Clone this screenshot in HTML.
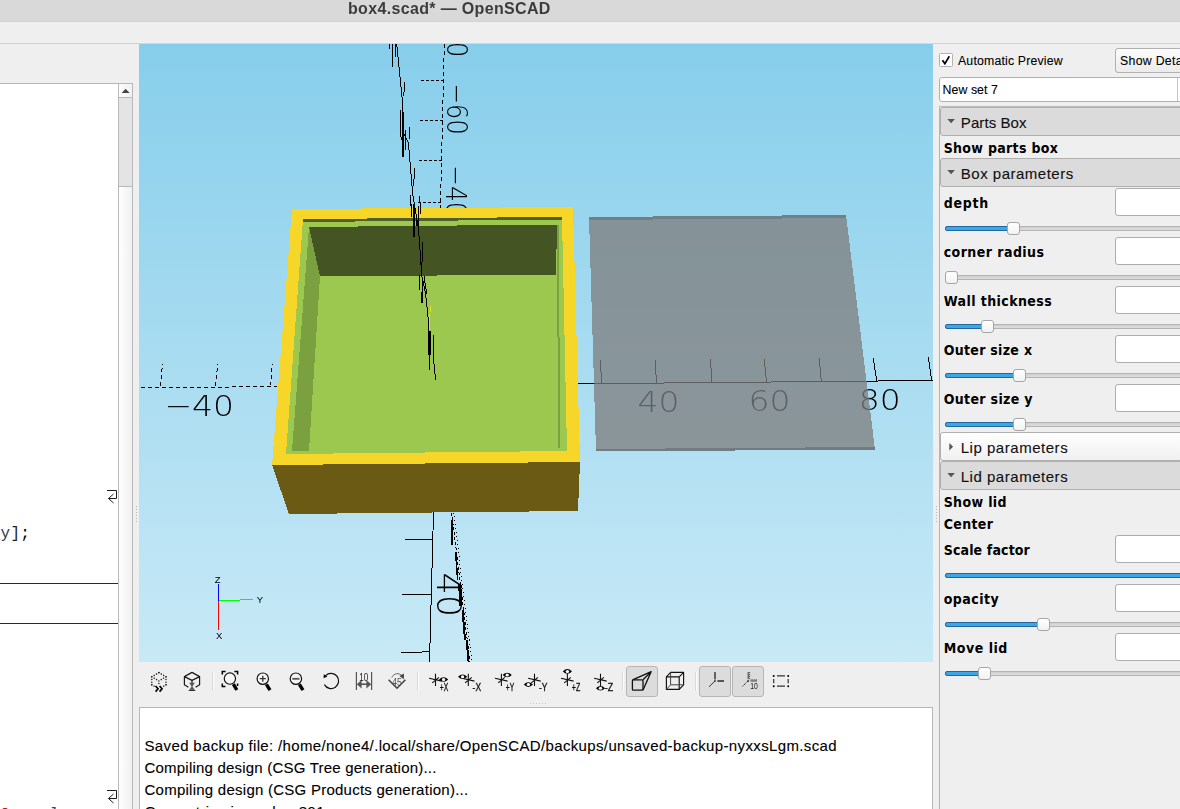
<!DOCTYPE html>
<html lang="en">
<head>
<meta charset="utf-8">
<title>box4.scad* — OpenSCAD</title>
<style>
*{box-sizing:border-box;margin:0;padding:0}
html,body{width:1180px;height:809px;overflow:hidden;background:#efefef}
body{position:relative;font-family:"Liberation Sans","DejaVu Sans",sans-serif;color:#000;font-size:12px}
.abs{position:absolute}
#titlebar{left:0;top:0;width:1180px;height:22px;background:linear-gradient(#d9d9d9 0,#d9d9d9 21px,#d3d3d3 21px,#d3d3d3 22px)}
#title{left:348px;top:-1px;height:20px;line-height:20px;font-weight:bold;font-size:16px;letter-spacing:0.34px;color:#3c3c3c;white-space:nowrap;transform:translateY(-0.3px);will-change:transform}
#topline{left:0;top:43px;width:139px;height:1px;background:#d1d1d1}
#topline2{left:139px;top:43px;width:794px;height:1px;background:#d9d5d2}
#topline3{left:933px;top:43px;width:247px;height:1px;background:#d2d2d2}
#topline0{left:0;top:42px;width:1180px;height:1px;background:#f1f1f1}
/* editor */
#editor{left:0;top:83px;width:119px;height:726px;background:#fff;border-top:1px solid #b6b6b6}
#vscroll{left:118px;top:83px;width:15px;height:726px;border:1px solid #b8b8b8;border-bottom:0;background:linear-gradient(90deg,#fff,#f0f0f0)}
#vs-up{left:0;top:0;width:13px;height:13px;background:linear-gradient(90deg,#fdfdfd,#f1f1f1);border-bottom:1px solid #b8b8b8;height:14px}
#vs-thumb{left:0;top:14px;width:13px;height:89px;background:#e4e4e4;border-bottom:1px solid #b8b8b8}
.code{font-family:"Liberation Mono","DejaVu Sans Mono",monospace;color:#333;white-space:pre}
.hr{left:0;width:118px;height:1px;background:#2a2a2a}
/* viewport */
#view{left:139px;top:44px;width:794px;height:618px;display:block}
/* console */
#console{left:139px;top:707px;width:794px;height:110px;background:#fff;border:1px solid #b6b6b6}
.cl{white-space:nowrap;font-size:15px;line-height:20px;height:20px;color:#000;-webkit-text-stroke:0.12px #000}
/* right panel */
#pline{left:939px;top:106px;width:1px;height:703px;background:#b4b4b4}
/*PANELCSS-START*/
.tx{white-space:nowrap;height:20px}
.rg{-webkit-text-stroke:0.1px #000}
.cb{left:939px;top:53px;width:14px;height:14px;background:#fff;border:1px solid #b2b2b2;border-radius:1.5px}
.btn{left:1115px;top:48px;width:80px;height:25px;border:1px solid #b0b0b0;border-radius:3px;background:linear-gradient(#fcfcfc,#ebebeb)}
.combo{left:939px;top:77px;width:260px;height:25px;border:1px solid #b0b0b0;border-radius:3px;background:#fff}
.gh{left:940px;width:250px;height:29px;border:1px solid #b0b0b0;border-radius:3px;background:#dbdbdb}
.gh.col{background:linear-gradient(#ffffff,#f0f0f0)}
.in{left:1115px;width:80px;height:28px;background:#fff;border:1px solid #adadad;border-radius:3px}
.sg{left:945px;width:240px;height:5px;border:1px solid #b4b4b4;border-radius:2px;background:linear-gradient(#cfcfcf,#dedede)}
.sf{left:945px;height:5px;border:1px solid #22689e;border-radius:2px;background:#3da6e6}
.sh{width:13px;height:13px;border:1px solid #a6a6a6;border-radius:3px;background:linear-gradient(#ffffff,#f2f2f2)}
/*PANELCSS-END*/
</style>
</head>
<body>
<div id="titlebar" class="abs"></div>
<div id="title" class="abs">box4.scad* — OpenSCAD</div>
<div id="topline" class="abs"></div>
<div id="topline0" class="abs"></div>
<div id="topline2" class="abs"></div>
<div id="topline3" class="abs"></div>

<!-- EDITOR -->
<div id="editor" class="abs"></div>
<div id="vscroll" class="abs"><div id="vs-up" class="abs"><svg class="abs" style="left:1px;top:3px" width="11" height="8" viewBox="0 0 11 8"><path d="M1.6 6.1L5.6 1.7L9.6 6.1Z" fill="#444"/></svg></div><div id="vs-thumb" class="abs"></div></div>
<!--EDITOR-CONTENT-START-->
<div class="abs code" style="left:-9.4px;top:521px;font-size:16px;letter-spacing:0.3px;line-height:26px;height:26px;color:#3a3a48"><span style="color:#39f">_</span>y<span style="color:#1c1c3c">]</span><span style="color:#000">;</span></div>
<div class="abs hr" style="top:583px"></div>
<div class="abs hr" style="top:623px"></div>
<svg class="abs" style="left:105px;top:488px" width="14" height="17" viewBox="105 488 14 17" fill="none" stroke="#1c1c1c" stroke-width="1"><path d="M107 490.5H116.5V498.5H108.5M113.5 494L108.5 498.5L113.5 503" /></svg>
<svg class="abs" style="left:105px;top:788px" width="14" height="17" viewBox="105 788 14 17" fill="none" stroke="#1c1c1c" stroke-width="1"><path d="M107 790.5H116.5V798.5H108.5M113.5 794L108.5 798.5L113.5 803" /></svg>
<div class="abs code" style="left:0.3px;top:802px;font-size:16px;letter-spacing:0.3px;line-height:26px;height:26px;color:#b01020">0<span style="color:#204a87">    l</span></div>
<svg class="abs" style="left:134px;top:500px" width="5" height="30" viewBox="134 500 5 30"><g fill="#b4b4b4"><rect x="136" y="506" width="1" height="1"/><rect x="136" y="509" width="1" height="1"/><rect x="136" y="512" width="1" height="1"/><rect x="136" y="515" width="1" height="1"/><rect x="136" y="518" width="1" height="1"/><rect x="136" y="521" width="1" height="1"/></g></svg>
<svg class="abs" style="left:934px;top:500px" width="5" height="30" viewBox="934 500 5 30"><g fill="#b4b4b4"><rect x="936" y="506" width="1" height="1"/><rect x="936" y="509" width="1" height="1"/><rect x="936" y="512" width="1" height="1"/><rect x="936" y="515" width="1" height="1"/><rect x="936" y="518" width="1" height="1"/><rect x="936" y="521" width="1" height="1"/></g></svg>
<!--EDITOR-CONTENT-END-->

<!-- VIEWPORT -->
<!--VIEWPORT-START-->
<svg id="view" class="abs" viewBox="139 44 794 618" width="794" height="618" shape-rendering="crispEdges" style="will-change:transform">
<defs>
<linearGradient id="sky" x1="0" y1="0" x2="0" y2="1"><stop offset="0" stop-color="#87ceeb"/><stop offset="1" stop-color="#c8e9f6"/></linearGradient>
</defs>
<rect x="139" y="44" width="794" height="618" fill="url(#sky)"/>
<g id="axes-back" stroke="#000" stroke-width="1" fill="none">
<!-- negative Y axis (dashed) -->
<path d="M141.5 387.8L277.5 386.6" stroke-dasharray="4 3"/>
<path d="M160.6 386L162.4 364M215.6 386L217.7 364M270.8 385.5L272.2 364" stroke-dasharray="4 3"/>
<!-- upper dashed scale -->
<path d="M444.3 44L440.4 208" stroke-dasharray="4 3"/>
<path d="M443.5 80.5H420M442.5 120.5H419M441.5 160.5H418M440.5 202.5H417" stroke-dasharray="3 2"/>
<!-- lower scale -->
<path d="M433.5 512L429.5 662"/>
<path d="M432.5 539.5H405M431.3 594.5H402M429.6 651.8L401 652.6"/>
<!-- Y axis positive -->
<path d="M578 383.8L933 380.5"/>
<path d="M601.7 383.5L600.3 360M656.5 383L655.1 360M711.9 382.5L710.5 359M766.5 382L764.2 359M821.3 381.5L819.2 358M876.7 381L873.2 357.7M931.7 380.5L928.2 356.8"/>
</g>
<g id="axis-labels" font-family="'DejaVu Sans','Liberation Sans',sans-serif" font-weight="200" font-size="29.2" fill="#000" shape-rendering="auto">
<text transform="translate(164.4 416.1) scale(1.13 1)">−40</text>
<text transform="translate(637.4 411.8) scale(1.13 1)">40</text>
<text transform="translate(748.6 411) scale(1.13 1)">60</text>
<text transform="translate(858.8 410.1) scale(1.13 1)">80</text>
<text transform="translate(447.3 41.8) rotate(90) scale(0.84 1)">0</text>
<text transform="translate(447.3 83.4) rotate(90) scale(0.84 1)" letter-spacing="-0.1">−60</text>
<text transform="translate(446 165) rotate(90) scale(0.86 1)" letter-spacing="-0.1">−40</text>
<text transform="translate(437 572.4) rotate(90) scale(1.2 1.14)" letter-spacing="0">40</text>
</g>
<!-- box -->
<polygon points="292,209 573,207 580,462 272,465" fill="#f6d628"/>
<polygon points="272,465 580,462 578,511 289,514" fill="#6b5a13"/>
<polygon points="303,219 562,217 567,451 286,454" fill="#9cc850"/>
<polygon points="303,219 562,217 562,219.5 303,222" fill="#4f6128"/>
<polygon points="309,227 557,224.5 556,274.5 320,276.5" fill="#445523"/>
<polygon points="309,227 320,276.5 309,451 292,451" fill="#7ba040"/>
<polygon points="556.5,224.5 558.5,224.5 560.5,448 558.5,448" fill="#7ba040"/>
<!-- X axis squiggle -->
<g id="squig" stroke="#000" stroke-width="1" fill="none">
<path d="M396.7 44L402.3 99.6L404 134L408.4 143L412.8 195L418.4 228L419.5 242.4L421.7 275.2L425.6 294L428.9 325L429.5 356L429.5 369.6"/>
<path d="M392.6 44V66.8M389.5 44V49M395.5 44V57" />
<path d="M404.5 81.8V89.6L403 96M400.6 109.6V134L401.5 140M409.5 126.9V139M405.5 130V150"/><path d="M403 112V157" stroke-width="2"/>
<path d="M414.5 168V175.2L413 186M410.6 195V206M411 204V217M416.5 217V226M418.4 206V228M419.5 196L421 214"/>
<path d="M413.5 204V237" stroke-width="2"/>
<path d="M422.3 242.4V259.6L421.5 266M419.5 275V290M424 276L426.7 294M422 280V302.7" />
<path d="M422 292V302.7" stroke-width="2"/>
<path d="M429.3 331L429.3 355" stroke-width="3"/>
<path d="M433.4 335V357.4L435.6 379.6"/>
<path d="M430.6 306V311.8M429.5 313.5V330" stroke="#f6d628"/>
<path d="M451.6 512.5L470 662" stroke-dasharray="3 2"/>
<path d="M453.6 512.5L472 662" stroke-dasharray="1 3"/>
<path d="M451.8 520V544.6M462.5 610L465 640M466.6 640L468.6 662" stroke-width="2"/><path d="M459.6 584L461 606" stroke-width="3"/>
<path d="M455.6 552L457.6 580" stroke-width="1.5"/>
</g>
<!-- lid -->
<polygon points="589,217 846,215 875,449.5 596,451.5" fill="#7d7d7d" fill-opacity="0.755"/>
<polygon points="589,217 846,215 846.4,218 589,220" fill="#000" fill-opacity="0.13"/>
<polygon points="596,449 875,447 875,449.5 596,451.5" fill="#000" fill-opacity="0.16"/>
<!-- small axes indicator -->
<g stroke-width="1" fill="none">
<path d="M218.5 584V601" stroke="#0000ff"/>
<path d="M218.5 600.5H240M240 599.5H253" stroke="#00ff00"/>
<path d="M218.5 601V630" stroke="#ff0000"/>
</g>
<g font-family="'Liberation Sans',sans-serif" fill="#000" font-size="9.5" shape-rendering="auto">
<text x="214.7" y="583">Z</text>
<text x="256.7" y="603">Y</text>
<text x="216" y="639.3">X</text>
</g>
</svg>
<!--VIEWPORT-END-->

<!-- TOOLBAR -->
<!--TOOLBAR-START-->
<svg id="tb" class="abs" viewBox="139 662 794 45" width="794" height="45" style="left:139px;top:662px;will-change:transform" fill="none" stroke-linecap="butt">
<path d="M212.5 672V691" stroke="#d9d9d9"/><path d="M213.5 672V691" stroke="#fbfbfb"/>
<path d="M417.5 672V691" stroke="#d9d9d9"/><path d="M418.5 672V691" stroke="#fbfbfb"/>
<path d="M622.5 672V691" stroke="#d9d9d9"/><path d="M623.5 672V691" stroke="#fbfbfb"/>
<path d="M695.5 672V691" stroke="#d9d9d9"/><path d="M696.5 672V691" stroke="#fbfbfb"/>
<rect x="626.5" y="666.5" width="31" height="30" rx="2.5" fill="#dcdcdc" stroke="#b6b6b6"/>
<rect x="699.5" y="666.5" width="31" height="30" rx="2.5" fill="#dcdcdc" stroke="#b6b6b6"/>
<rect x="732.5" y="666.5" width="31" height="30" rx="2.5" fill="#dcdcdc" stroke="#b6b6b6"/>
<g stroke="#1a1a1a" stroke-width="1.5" stroke-linecap="round" stroke-dasharray="0.01 2.74"><path d="M158.9 672.6L166 676.8"/><path d="M158.9 672.6L151.8 676.8"/><path d="M151.8 676.8L158.9 680.9"/><path d="M166 676.8L158.9 680.9"/></g><g stroke="#1a1a1a" stroke-width="1.5" stroke-linecap="round" stroke-dasharray="0.01 2.66"><path d="M166 676.8V684.9"/><path d="M151.8 676.8V684.9"/><path d="M158.9 680.9V686"/><path d="M166 684.8L162.4 687"/><path d="M151.8 684.8L155.4 687"/></g>
<path d="M155.6 686L158 688.8L155.6 691.6M159.6 686L162 688.8L159.6 691.6" stroke="#000" stroke-width="1.7"/>
<g stroke="#1a1a1a" stroke-width="1.2" stroke-linejoin="round"><path d="M192 672.4L199.6 676.6V684.8L195.6 687.2M192 672.4L184.4 676.6V684.8L188.4 687.2M184.4 676.6L192 680.4L199.6 676.6M192 680.4V683"/></g>
<path d="M189.2 682.8H194.8L192.4 686.6L194.6 689.8H189.4L191.6 686.6Z" fill="#555"/><path d="M188.8 690.4H195.2" stroke="#222" stroke-width="1.1"/>
<g stroke="#000" stroke-width="1.5"><path d="M222.3 674.6V671.6H225.6M234.4 671.6H237.6V674.6M222.3 683.4V686.4H225.4M237.6 683.4V686"/></g>
<circle cx="229.9" cy="678.6" r="5.65" stroke="#111" stroke-width="1.2" fill="#f6f6f6"/><path d="M233.4 684.2L236.8 690" stroke="#000" stroke-width="3.4"/>
<circle cx="262.8" cy="678.7" r="5.7" stroke="#111" stroke-width="1.2" fill="#f6f6f6"/><path d="M259.8 678.7H265.8M262.8 675.7V681.7" stroke="#333" stroke-width="1.3"/><path d="M266.4 684.4L270 690.2" stroke="#000" stroke-width="3.4"/>
<circle cx="295.9" cy="678.7" r="5.7" stroke="#111" stroke-width="1.2" fill="#f6f6f6"/><path d="M292.3 678.8H299.5" stroke="#555" stroke-width="1.8"/><path d="M299.4 684.4L303 690.2" stroke="#000" stroke-width="3.4"/>
<path d="M325.6 675.6A7.6 7.6 0 1 1 324.4 684.6" stroke="#111" stroke-width="1.2"/><path d="M323.8 674.2L327.4 676.4L323.6 678.2Z" fill="#000"/>
<path d="M356.4 672V690M371.6 672V690" stroke="#555" stroke-width="1.2"/><path d="M360 684.2H368" stroke="#555" stroke-width="1.6"/><path d="M356.8 684.2L361.6 680V688.6Z M371.2 684.2L366.4 680V688.6Z" fill="#555"/>
<text x="359.2" y="680.6" font-family="'Liberation Sans',sans-serif" font-size="10.5" textLength="9" lengthAdjust="spacingAndGlyphs" fill="#222">10</text>
<path d="M388.6 679.8L397 688.2L405.4 679.8" stroke="#444" stroke-width="1.6"/><path d="M391.8 677.6A6 6 0 0 1 402 675.8" stroke="#666" stroke-width="1"/><path d="M399.4 676L404 673.4L403.8 679.2Z" fill="#444"/>
<text x="392.2" y="685.6" font-family="'Liberation Sans',sans-serif" font-size="10" textLength="9.6" lengthAdjust="spacingAndGlyphs" fill="#555">45</text>
<path d="M435.5 673.6999999999999V686.1M429.1 678.3L441.7 681.1M432.3 682.9L438.9 677.3" stroke="#111" stroke-width="1.1"/>
<path d="M439.0 679.5Q443.6 674.9 448.20000000000005 679.5Q443.6 684.1 439.0 679.5Z" fill="#000"/><ellipse cx="443.6" cy="679.5" rx="1.7" ry="1.5" fill="#fff"/>
<text x="439.8" y="691.4" font-family="'Liberation Sans',sans-serif" font-size="10.5" textLength="8.4" lengthAdjust="spacingAndGlyphs" fill="#111" stroke="#111" stroke-width="0.35">+X</text>
<path d="M468.3 673.6999999999999V686.1M461.90000000000003 678.3L474.5 681.1M465.1 682.9L471.7 677.3" stroke="#111" stroke-width="1.1"/>
<path d="M458.0 676.8Q462.6 672.1999999999999 467.20000000000005 676.8Q462.6 681.4 458.0 676.8Z" fill="#000"/><ellipse cx="462.6" cy="676.8" rx="1.7" ry="1.5" fill="#fff"/>
<text x="472.6" y="691.4" font-family="'Liberation Sans',sans-serif" font-size="10.5" textLength="8.4" lengthAdjust="spacingAndGlyphs" fill="#111" stroke="#111" stroke-width="0.35">-X</text>
<path d="M501.4 673.6999999999999V686.1M495.0 678.3L507.59999999999997 681.1M498.2 682.9L504.79999999999995 677.3" stroke="#111" stroke-width="1.1"/>
<path d="M502.59999999999997 675Q507.2 670.4 511.8 675Q507.2 679.6 502.59999999999997 675Z" fill="#000"/><ellipse cx="507.2" cy="675" rx="1.7" ry="1.5" fill="#fff"/>
<text x="505.8" y="691.4" font-family="'Liberation Sans',sans-serif" font-size="10.5" textLength="8.4" lengthAdjust="spacingAndGlyphs" fill="#111" stroke="#111" stroke-width="0.35">+Y</text>
<path d="M534.5 673.6999999999999V686.1M528.1 678.3L540.7 681.1M531.3 682.9L537.9 677.3" stroke="#111" stroke-width="1.1"/>
<path d="M523.8 684.6Q528.4 680.0 533.0 684.6Q528.4 689.2 523.8 684.6Z" fill="#000"/><ellipse cx="528.4" cy="684.6" rx="1.7" ry="1.5" fill="#fff"/>
<text x="539" y="691.4" font-family="'Liberation Sans',sans-serif" font-size="10.5" textLength="8.4" lengthAdjust="spacingAndGlyphs" fill="#111" stroke="#111" stroke-width="0.35">-Y</text>
<path d="M567.4 673.6999999999999V686.1M561.0 678.3L573.6 681.1M564.1999999999999 682.9L570.8 677.3" stroke="#111" stroke-width="1.1"/>
<path d="M562.8 671.4Q567.4 666.8 572.0 671.4Q567.4 676.0 562.8 671.4Z" fill="#000"/><ellipse cx="567.4" cy="671.4" rx="1.7" ry="1.5" fill="#fff"/>
<text x="571.8" y="691.4" font-family="'Liberation Sans',sans-serif" font-size="10.5" textLength="8.4" lengthAdjust="spacingAndGlyphs" fill="#111" stroke="#111" stroke-width="0.35">+Z</text>
<path d="M600.5 673.6999999999999V686.1M594.1 678.3L606.7 681.1M597.3 682.9L603.9 677.3" stroke="#111" stroke-width="1.1"/>
<path d="M595.9 688.3Q600.5 683.6999999999999 605.1 688.3Q600.5 692.9 595.9 688.3Z" fill="#000"/><ellipse cx="600.5" cy="688.3" rx="1.7" ry="1.5" fill="#fff"/>
<text x="604.8" y="691.4" font-family="'Liberation Sans',sans-serif" font-size="10.5" textLength="8.4" lengthAdjust="spacingAndGlyphs" fill="#111" stroke="#111" stroke-width="0.35">-Z</text>
<g stroke="#111" stroke-width="1.3" stroke-linejoin="round"><rect x="632.4" y="679.8" width="10.6" height="10.4" rx="1"/><path d="M632.6 679.8L651.2 671.6L643 679.8M651.2 671.6L643 690"/></g>
<g stroke="#111" stroke-width="1.15" stroke-linejoin="round"><path d="M666.4 676.8L670.6 672.4H683.6V684.8L679.2 689.4H666.4Z"/><path d="M666.4 676.8H679.2V689.4M679.2 676.8L683.6 672.4" /><path d="M670.6 672.4V684.8H683.6M670.6 684.8L666.4 689.4" stroke="#444" stroke-width="1"/></g>
<path d="M715 672V679.4M717.4 681H724" stroke="#555" stroke-width="1.8"/><path d="M715 681L709 686.8" stroke="#222" stroke-width="0.9"/><rect x="714.2" y="680.2" width="1.6" height="1.6" fill="#333"/>
<path d="M748.2 672V679.2" stroke="#555" stroke-width="1.2"/><path d="M749.4 672V679.2" stroke="#555" stroke-width="1.4" stroke-dasharray="1.1 0.8"/><path d="M750.4 681H757" stroke="#555" stroke-width="1.1"/><path d="M750.4 679.9H757" stroke="#555" stroke-width="1.2" stroke-dasharray="1.1 0.8"/><path d="M748 681L742 686.8" stroke="#222" stroke-width="1" stroke-dasharray="1.4 0.7"/><rect x="747.4" y="680.2" width="1.6" height="1.6" fill="#333"/>
<text x="750.2" y="689.4" font-family="'Liberation Sans',sans-serif" font-size="8.6" textLength="7.6" lengthAdjust="spacingAndGlyphs" fill="#222">10</text>
<g fill="#000"><circle cx="773.7" cy="675.9" r="1"/><circle cx="788.2" cy="675.9" r="1"/><circle cx="773.7" cy="686.2" r="1"/><circle cx="788.2" cy="686.2" r="1"/></g><path d="M777 675.9H785M777 686.2H785M773.7 679V683.2M788.2 679V683.2" stroke="#333" stroke-width="1.2"/>
<g fill="#c4c4c4"><rect x="530" y="703" width="1" height="1"/><rect x="533" y="703" width="1" height="1"/><rect x="536" y="703" width="1" height="1"/><rect x="539" y="703" width="1" height="1"/><rect x="542" y="703" width="1" height="1"/><rect x="545" y="703" width="1" height="1"/></g>
</svg>
<!--TOOLBAR-END-->

<!-- CONSOLE -->
<div id="console" class="abs"></div>
<div class="abs cl" style="left:144.5px;top:736px;letter-spacing:0.36px">Saved backup file: /home/none4/.local/share/OpenSCAD/backups/unsaved-backup-nyxxsLgm.scad</div>
<div class="abs cl" style="left:144.5px;top:758px;letter-spacing:0.21px">Compiling design (CSG Tree generation)...</div>
<div class="abs cl" style="left:144.5px;top:780px;letter-spacing:0.25px">Compiling design (CSG Products generation)...</div>
<div class="abs cl" style="left:144.5px;top:802px;letter-spacing:0.4px">Geometries in cache: 891</div>

<!-- PANEL -->
<div id="pline" class="abs"></div>
<!--PANEL-START-->
<div class="abs cb"><svg width="12" height="12" viewBox="0 0 12 12" class="abs" style="left:0;top:0"><path d="M2.4 6.2L4.9 9.6L9.3 2.3" fill="none" stroke="#000" stroke-width="1.7"/></svg></div>
<div class="abs tx rg" style="left:958.00px;top:51px;font:12.3px 'Liberation Sans';line-height:20px;letter-spacing:0.17px;color:#000">Automatic Preview</div>
<div class="abs btn"></div><div class="abs tx rg" style="left:1120.00px;top:51px;font:12.3px 'Liberation Sans';line-height:20px;letter-spacing:0.3px;color:#000">Show Details</div>
<div class="abs combo"></div><div class="abs" style="left:1177px;top:78px;width:1px;height:23px;background:#c4c4c4"></div><div class="abs tx rg" style="left:942.60px;top:80px;font:12.3px 'Liberation Sans';line-height:20px;letter-spacing:0.07px;color:#000">New set 7</div>
<div class="abs" style="left:939px;top:106px;width:241px;height:1px;background:#b9b9b9"></div>
<div class="abs gh" style="top:107px"></div><svg class="abs" style="left:946px;top:117px" width="10" height="10" viewBox="0 0 10 10"><path d="M1.3 2H8.9L5.1 6.3Z" fill="#555"/></svg><div class="abs tx rg" style="left:960.80px;top:113px;font:15px 'Liberation Sans';line-height:20px;letter-spacing:0.08px;color:#111">Parts Box</div>
<div class="abs tx" style="left:943.70px;top:138px;font:bold 14px 'DejaVu Sans Condensed';line-height:20px;letter-spacing:0.31px;color:#000">Show parts box</div>
<div class="abs gh" style="top:158px"></div><svg class="abs" style="left:946px;top:168px" width="10" height="10" viewBox="0 0 10 10"><path d="M1.3 2H8.9L5.1 6.3Z" fill="#555"/></svg><div class="abs tx rg" style="left:960.80px;top:164px;font:15px 'Liberation Sans';line-height:20px;letter-spacing:0.5px;color:#111">Box parameters</div>
<div class="abs tx" style="left:943.70px;top:193px;font:bold 14px 'DejaVu Sans Condensed';line-height:20px;letter-spacing:0.75px;color:#000">depth</div>
<div class="abs in" style="top:188px"></div>
<div class="abs sg" style="top:226px"></div><div class="abs sf" style="top:226px;width:66px"></div><div class="abs sh" style="left:1007px;top:222px"></div>
<div class="abs tx" style="left:943.70px;top:242px;font:bold 14px 'DejaVu Sans Condensed';line-height:20px;letter-spacing:0.45px;color:#000">corner radius</div>
<div class="abs in" style="top:237px"></div>
<div class="abs sg" style="top:275px"></div><div class="abs sh" style="left:945px;top:271px"></div>
<div class="abs tx" style="left:943.70px;top:291px;font:bold 14px 'DejaVu Sans Condensed';line-height:20px;letter-spacing:0.42px;color:#000">Wall thickness</div>
<div class="abs in" style="top:286px"></div>
<div class="abs sg" style="top:324px"></div><div class="abs sf" style="top:324px;width:40px"></div><div class="abs sh" style="left:981px;top:320px"></div>
<div class="abs tx" style="left:943.70px;top:340px;font:bold 14px 'DejaVu Sans Condensed';line-height:20px;letter-spacing:0.3px;color:#000">Outer size x</div>
<div class="abs in" style="top:335px"></div>
<div class="abs sg" style="top:373px"></div><div class="abs sf" style="top:373px;width:72px"></div><div class="abs sh" style="left:1013px;top:369px"></div>
<div class="abs tx" style="left:943.70px;top:389px;font:bold 14px 'DejaVu Sans Condensed';line-height:20px;letter-spacing:0.34px;color:#000">Outer size y</div>
<div class="abs in" style="top:384px"></div>
<div class="abs sg" style="top:422px"></div><div class="abs sf" style="top:422px;width:72px"></div><div class="abs sh" style="left:1013px;top:418px"></div>
<div class="abs gh col" style="top:432px"></div><svg class="abs" style="left:947px;top:441px" width="10" height="12" viewBox="0 0 10 12"><path d="M2.3 1.9L6.1 5.65L2.3 9.4Z" fill="#555"/></svg><div class="abs tx rg" style="left:960.70px;top:438px;font:15px 'Liberation Sans';line-height:20px;letter-spacing:0.53px;color:#111">Lip parameters</div>
<div class="abs gh" style="top:461px"></div><svg class="abs" style="left:946px;top:471px" width="10" height="10" viewBox="0 0 10 10"><path d="M1.3 2H8.9L5.1 6.3Z" fill="#555"/></svg><div class="abs tx rg" style="left:960.70px;top:467px;font:15px 'Liberation Sans';line-height:20px;letter-spacing:0.53px;color:#111">Lid parameters</div>
<div class="abs tx" style="left:943.70px;top:492px;font:bold 14px 'DejaVu Sans Condensed';line-height:20px;letter-spacing:0.35px;color:#000">Show lid</div>
<div class="abs tx" style="left:943.70px;top:514px;font:bold 14px 'DejaVu Sans Condensed';line-height:20px;letter-spacing:0.34px;color:#000">Center</div>
<div class="abs tx" style="left:943.70px;top:540px;font:bold 14px 'DejaVu Sans Condensed';line-height:20px;letter-spacing:0.14px;color:#000">Scale factor</div>
<div class="abs in" style="top:535px"></div>
<div class="abs sg" style="top:573px"></div><div class="abs sf" style="top:573px;width:240px"></div>
<div class="abs tx" style="left:943.70px;top:589px;font:bold 14px 'DejaVu Sans Condensed';line-height:20px;letter-spacing:0.49px;color:#000">opacity</div>
<div class="abs in" style="top:584px"></div>
<div class="abs sg" style="top:622px"></div><div class="abs sf" style="top:622px;width:96px"></div><div class="abs sh" style="left:1037px;top:618px"></div>
<div class="abs tx" style="left:943.70px;top:638px;font:bold 14px 'DejaVu Sans Condensed';line-height:20px;letter-spacing:0.53px;color:#000">Move lid</div>
<div class="abs in" style="top:633px"></div>
<div class="abs sg" style="top:671px"></div><div class="abs sf" style="top:671px;width:37px"></div><div class="abs sh" style="left:978px;top:667px"></div>
<!--PANEL-END-->
</body>
</html>
